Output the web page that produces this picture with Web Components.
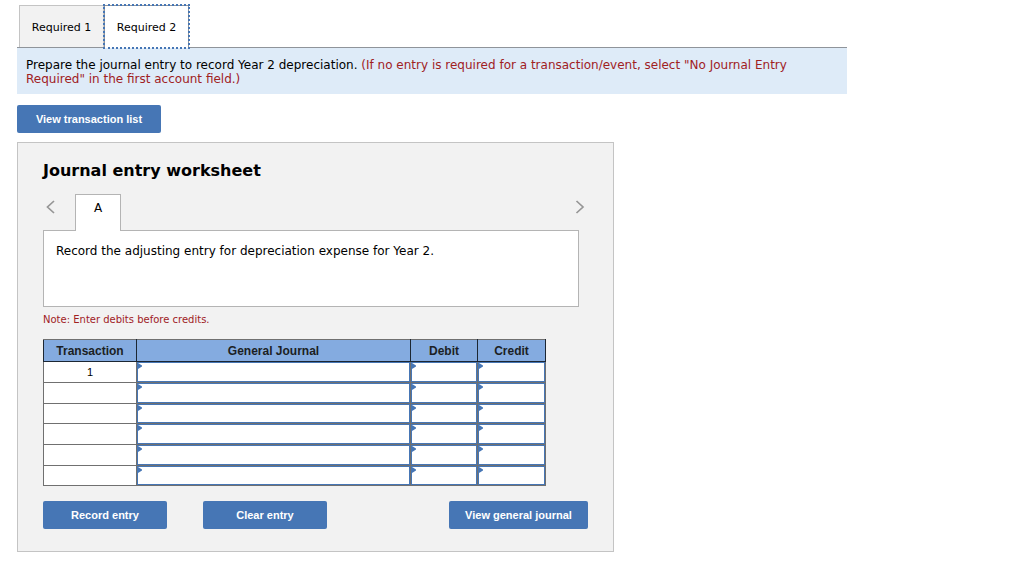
<!DOCTYPE html>
<html lang="en">
<head>
<meta charset="utf-8">
<title>Journal entry worksheet</title>
<style>
    body {
        margin: 0;
        padding: 5px 17px 15px;
        background-color: #fff;
        color: #000;
        font-family: Verdana, "DejaVu Sans", sans-serif;
        font-size: 12px;
    }
</style>
</head>
<body>
<eh-assignment>
    <eh-tab slot="tabs">Required 1</eh-tab>
    <eh-tab slot="tabs" selected>Required 2</eh-tab>
    <span slot="prompt">Prepare the journal entry to record Year 2 depreciation.</span>
    <span slot="hint">(If no entry is required for a transaction/event, select "No Journal Entry Required" in the first account field.)</span>
    <eh-button style="--button-width: 144px">View transaction list</eh-button>
    <eh-worksheet>
        <span slot="title">Journal entry worksheet</span>
        <span slot="step">A</span>
        <span slot="description">Record the adjusting entry for depreciation expense for Year 2.</span>
        <span slot="note">Note: Enter debits before credits.</span>
        <eh-journal-table rows="6"></eh-journal-table>
        <eh-button slot="actions">Record entry</eh-button>
        <eh-button slot="actions">Clear entry</eh-button>
        <eh-button slot="main-action" style="--button-width: 139px">View general journal</eh-button>
    </eh-worksheet>
</eh-assignment>

<script>
{
    const define = (name, template, setup) => {
        customElements.define(name, class extends HTMLElement {
            constructor() {
                super();
                const shadowRoot = this.attachShadow({mode: 'open'});
                shadowRoot.innerHTML = template;
            }
            connectedCallback() {
                if (setup) setup(this, this.shadowRoot);
            }
        });
    };

    define('eh-button', `
        <style>
        :host {
            display: block;
            width: var(--button-width, 124px);
        }
        button {
            display: block;
            width: 100%;
            height: 28px;
            padding: 0;
            border: 0;
            border-radius: 2px;
            background-color: #4676b5;
            color: #fff;
            font: bold 11px/28px Arial, "Liberation Sans", sans-serif;
            white-space: nowrap;
            cursor: pointer;
        }
        button:hover {
            background-color: #3a659e;
        }
        </style>
        <button type="button"><slot></slot></button>
    `);

    define('eh-tab', `
        <style>
        :host {
            display: block;
        }
        button {
            display: block;
            box-sizing: border-box;
            width: 85px;
            height: 42px;
            padding: 0;
            border: 1px solid #c4c4c4;
            border-bottom: 0;
            background-color: #f2f2f2;
            color: #000;
            font: 11px/43px Verdana, "DejaVu Sans", sans-serif;
            cursor: pointer;
        }
        :host([selected]) button {
            height: 43px;
            border-color: #8f949a;
            background-color: #fff;
            outline: 2px dotted #4676b5;
            outline-offset: -1px;
        }
        </style>
        <button type="button" role="tab"><slot></slot></button>
    `, (host, root) => {
        root.querySelector('button').setAttribute('aria-selected', host.hasAttribute('selected'));
    });

    define('eh-assignment', `
        <style>
        :host {
            display: block;
            max-width: 830px;
        }
        .tabs {
            display: flex;
            height: 42px;
            padding-left: 2px;
        }
        .prompt {
            padding: 10px 9px 8px;
            border-top: 1px solid #8f949a;
            background-color: #deebf8;
            line-height: 14px;
        }
        ::slotted([slot="tabs"][selected]) {
            z-index: 1;
        }
        ::slotted([slot="hint"]) {
            color: #a0211f;
        }
        .content {
            display: flex;
            flex-direction: column;
            gap: 9px;
            padding-top: 11px;
        }
        </style>
        <div class="tabs" role="tablist"><slot name="tabs"></slot></div>
        <div class="prompt"><slot name="prompt"></slot> <slot name="hint"></slot></div>
        <div class="content"><slot></slot></div>
    `);

    define('eh-worksheet', `
        <style>
        :host {
            display: block;
            box-sizing: border-box;
            max-width: 597px;
            padding: 18px 25px 22px;
            border: 1px solid #c4c4c4;
            background-color: #f2f2f2;
        }
        h2 {
            margin: 0;
            font-size: 16px;
            font-weight: bold;
            line-height: 20px;
        }
        .steps {
            display: flex;
            align-items: flex-start;
            height: 36px;
            margin-top: 13px;
        }
        .arrow {
            width: 16px;
            height: 26px;
            padding: 0;
            border: 0;
            background: none;
        }
        .arrow svg {
            display: block;
            margin: auto;
            fill: none;
            stroke: #969696;
            stroke-width: 1.7;
        }
        .next {
            margin-left: auto;
        }
        .step {
            box-sizing: border-box;
            position: relative;
            width: 46px;
            height: 37px;
            margin-left: 16px;
            padding: 0 0 11px;
            border: 1px solid #b4b4b4;
            border-bottom: 0;
            background-color: #fff;
            color: #000;
            font: 12px/24px Verdana, "DejaVu Sans", sans-serif;
        }
        .description {
            box-sizing: border-box;
            min-height: 77px;
            margin-right: 9px;
            padding: 13px 12px;
            border: 1px solid #b4b4b4;
            background-color: #fff;
            line-height: 14px;
        }
        .note {
            margin: 6px 0 12px;
            color: #a0211f;
            font-size: 10px;
            line-height: 14px;
        }
        .actions {
            display: flex;
            gap: 36px;
            margin-top: 15px;
        }
        ::slotted([slot="main-action"]) {
            margin-left: auto;
        }
        </style>
        <h2><slot name="title"></slot></h2>
        <div class="steps">
            <button class="arrow prev" type="button" aria-label="Previous">
                <svg width="10" height="14" viewBox="0 0 10 14"><path d="M8 1 L1.5 7 L8 13"/></svg>
            </button>
            <button class="step" type="button"><slot name="step"></slot></button>
            <button class="arrow next" type="button" aria-label="Next">
                <svg width="10" height="14" viewBox="0 0 10 14"><path d="M1.5 1 L8 7 L1.5 13"/></svg>
            </button>
        </div>
        <div class="description"><slot name="description"></slot></div>
        <div class="note"><slot name="note"></slot></div>
        <slot></slot>
        <div class="actions"><slot name="actions"></slot><slot name="main-action"></slot></div>
    `);

    // input with the small triangle that marks an editable cell
    define('eh-cell-input', `
        <style>
        :host {
            display: block;
            position: relative;
            height: 100%;
        }
        input {
            display: block;
            box-sizing: border-box;
            width: 100%;
            height: 100%;
            padding: 0 6px;
            border: 1px solid #4676b5;
            border-radius: 0;
            outline: 0;
            background-color: #fff;
            font: 11px Arial, "Liberation Sans", sans-serif;
        }
        svg {
            position: absolute;
            top: 1px;
            left: 0;
            fill: #4676b5;
            pointer-events: none;
        }
        </style>
        <input type="text">
        <svg width="5" height="6" viewBox="0 0 5 6"><path d="M0 0 H1 L5 2.5 V3.5 L1 6 H0 Z"/></svg>
    `, (host, root) => {
        root.querySelector('input').setAttribute('aria-label', host.getAttribute('label'));
    });

    define('eh-journal-table', `
        <style>
        :host {
            display: block;
            margin-right: 42px;
        }
        table {
            width: 100%;
            border-collapse: collapse;
            table-layout: fixed;
            background-color: #fff;
            font: 11px/14px Arial, "Liberation Sans", sans-serif;
            text-align: center;
        }
        th, td {
            box-sizing: border-box;
            padding: 0;
            border: 1px solid #707070;
        }
        th {
            height: 22px;
            border-left-color: #1c2733;
            border-right-color: #1c2733;
            border-bottom-color: #1c2733;
            background-color: #84abe0;
            color: #1c1f24;
            font-size: 12px;
        }
        td {
            height: 21px;
        }
        tr:nth-child(3n) td {
            height: 20px;
        }
        tr:nth-child(3n) eh-cell-input {
            height: 19px;
        }
        eh-cell-input {
            height: 20px;
        }
        .transaction {
            width: 93px;
        }
        .debit {
            width: 67px;
        }
        .credit {
            width: 68px;
        }
        </style>
        <table>
            <thead>
                <tr>
                    <th class="transaction" scope="col">Transaction</th>
                    <th scope="col">General Journal</th>
                    <th class="debit" scope="col">Debit</th>
                    <th class="credit" scope="col">Credit</th>
                </tr>
            </thead>
            <tbody></tbody>
        </table>
    `, (host, root) => {
        const body = root.querySelector('tbody');
        const count = Number(host.getAttribute('rows'));
        let rows = '';
        for (let i = 1; i <= count; i++) {
            rows += `
                <tr>
                    <td>${i === 1 ? '1' : ''}</td>
                    <td><eh-cell-input label="General journal, line ${i}"></eh-cell-input></td>
                    <td><eh-cell-input label="Debit, line ${i}"></eh-cell-input></td>
                    <td><eh-cell-input label="Credit, line ${i}"></eh-cell-input></td>
                </tr>`;
        }
        body.innerHTML = rows;
    });
}
</script>
</body>
</html>
